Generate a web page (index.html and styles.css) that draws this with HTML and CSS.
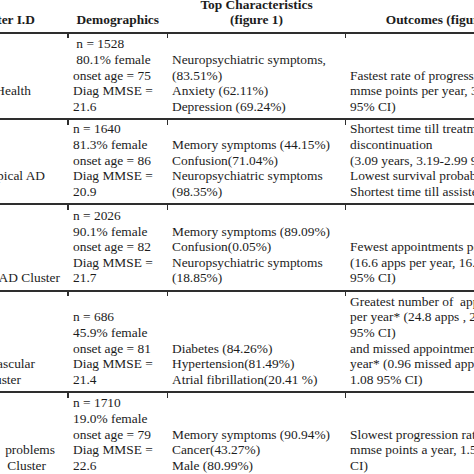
FILE: index.html
```html
<!DOCTYPE html>
<html>
<head>
<meta charset="utf-8">
<link rel="stylesheet" href="styles.css">
</head>
<body>
<div class="frame">
  <div class="grid">
    <div class="cell head c1"><div>Cluster I.D</div></div>
    <div class="cell head c2 ctr"><div>Demographics</div></div>
    <div class="cell head c3 ctr"><div>Top Characteristics</div><div>(figure 1)</div></div>
    <div class="cell head c4 ctr"><div>Outcomes (figure 2)</div></div>

    <div class="cell c1"><div class="p37">Mental Health</div><div>&nbsp;</div></div>
    <div class="cell c2 tk"><div>&nbsp;n = 1528</div><div>&nbsp;80.1% female</div><div>onset age = 75</div><div>Diag MMSE =</div><div>21.6</div></div>
    <div class="cell c3 tk"><div>Neuropsychiatric symptoms,</div><div>(83.51%)</div><div>Anxiety (62.11%)</div><div>Depression (69.24%)</div></div>
    <div class="cell c4 tk"><div>Fastest rate of progression (2.36</div><div>mmse points per year, 3.12-2.41</div><div>95% CI)</div></div>

    <div class="cell c1"><div class="p23">Typical AD</div><div>&nbsp;</div></div>
    <div class="cell c2 tk"><div>n = 1640</div><div>81.3% female</div><div>onset age = 86</div><div>Diag MMSE =</div><div>20.9</div></div>
    <div class="cell c3 tk"><div>Memory symptoms (44.15%)</div><div>Confusion(71.04%)</div><div>Neuropsychiatric symptoms</div><div>(98.35%)</div></div>
    <div class="cell c4 tk"><div>Shortest time till treatment</div><div>discontinuation</div><div>(3.09 years, 3.19-2.99 95% CI)</div><div>Lowest survival probability</div><div>Shortest time till assisted living</div></div>

    <div class="cell c1"><div class="p8">Mixed AD Cluster</div></div>
    <div class="cell c2 tk"><div>n = 2026</div><div>90.1% female</div><div>onset age = 82</div><div>Diag MMSE =</div><div>21.7</div></div>
    <div class="cell c3 tk"><div>Memory symptoms (89.09%)</div><div>Confusion(0.05%)</div><div>Neuropsychiatric symptoms</div><div>(18.85%)</div></div>
    <div class="cell c4 tk"><div>Fewest appointments per year*</div><div>(16.6 apps per year, 16.2-17.0</div><div>95% CI)</div></div>

    <div class="cell c1"><div class="p33">Vascular</div><div class="p47">Cluster</div></div>
    <div class="cell c2 tk"><div>n = 686</div><div>45.9% female</div><div>onset age = 81</div><div>Diag MMSE =</div><div>21.4</div></div>
    <div class="cell c3 tk"><div>Diabetes (84.26%)</div><div>Hypertension(81.49%)</div><div>Atrial fibrillation(20.41 %)</div></div>
    <div class="cell c4 tk"><div>Greatest number of&nbsp; appointments</div><div>per year* (24.8 apps , 23.9-25.7</div><div>95% CI)</div><div>and missed appointments per</div><div>year* (0.96 missed apps, 0.85-</div><div>1.08 95% CI)</div></div>

    <div class="cell c1"><div class="p13">Health&nbsp; problems</div><div class="p22">Cluster</div></div>
    <div class="cell c2 tk"><div>n = 1710</div><div>19.0% female</div><div>onset age = 79</div><div>Diag MMSE =</div><div>22.6</div></div>
    <div class="cell c3 tk"><div>Memory symptoms (90.94%)</div><div>Cancer(43.27%)</div><div>Male (80.99%)</div></div>
    <div class="cell c4 tk"><div>Slowest progression rate (1.41</div><div>mmse points a year, 1.52-1.30 95%</div><div>CI)</div></div>
  </div>
</div>
</body>
</html>
```
FILE: styles.css
```css
html, body {
  margin: 0;
  padding: 0;
  background: #ffffff;
}
.frame {
  width: 474px;
  height: 474px;
  overflow: hidden;
  background: #ffffff;
}
.grid {
  display: grid;
  grid-template-columns: 130px 99.5px 178px 194px;
  grid-template-rows: 36px 86.6px 85px 86.7px 101.3px 86px;
  margin-left: -62px;
  margin-top: -4.3px;
  width: 601.5px;
  font-family: "Liberation Serif", "Times New Roman", serif;
  font-size: 13.4px;
  line-height: 15.6px;
  color: #1c1c1c;
}
.cell {
  position: relative;
  display: flex;
  flex-direction: column;
  justify-content: flex-end;
  padding: 0 0 4px 0;
  border-top: 2px solid #2e2e2e;
  white-space: nowrap;
  box-sizing: border-box;
}
.cell.head {
  border-top: none;
  font-weight: bold;
}
.ctr {
  text-align: center;
}
.c1 {
  text-align: right;
}
.c1.head {
  text-align: center;
}
.c2 {
  padding-left: 5px;
}
.c2.ctr, .c3.ctr, .c4.ctr {
  padding-left: 0;
}
.c3, .c4 {
  padding-left: 4.5px;
}
.tk::before {
  content: "";
  position: absolute;
  left: -0.75px;
  top: -2px;
  width: 1.5px;
  height: 6.5px;
  background: #2e2e2e;
}
.p8 { padding-right: 8px; }
.p13 { padding-right: 13px; }
.p22 { padding-right: 22px; }
.p23 { padding-right: 23px; }
.p33 { padding-right: 33px; }
.p37 { padding-right: 37px; }
.p47 { padding-right: 47px; }
```
